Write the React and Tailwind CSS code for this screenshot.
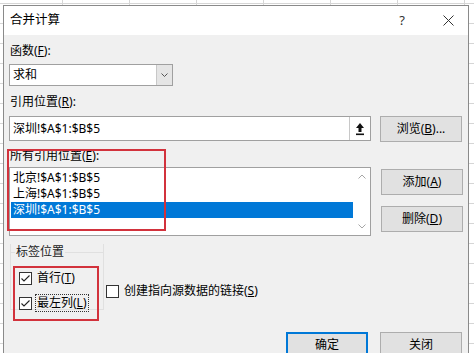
import { useState } from 'react';

const font = { fontFamily: '"Noto Sans", "Noto Sans CJK SC", sans-serif' };

function Btn({ children, primary, className = '' }) {
  return (
    <button
      className={`flex items-center justify-center w-[82px] h-[26px] text-[12px] text-black bg-[#e1e1e1] ${primary ? 'border-2 border-[#0078d7]' : 'border border-[#adadad]'} ${className}`}
    >
      {children}
    </button>
  );
}

function Check({ checked, children, focus }) {
  return (
    <div className="flex items-center h-[20px]">
      <span className="w-[13px] h-[13px] border border-[#333] bg-white flex items-center justify-center">
        {checked && (
          <svg width="11" height="11" viewBox="0 0 11 11">
            <path d="M1.5 5.5 L4 8 L9.5 2.5" fill="none" stroke="#222" strokeWidth="1.1" />
          </svg>
        )}
      </span>
      <span className={`ml-[4px] px-[1px] leading-[16px] ${focus ? 'outline outline-1 outline-dotted outline-[#333]' : ''}`}>
        {children}
      </span>
    </div>
  );
}

export default function App() {
  const [items] = useState(['北京!$A$1:$B$5', '上海!$A$1:$B$5', '深圳!$A$1:$B$5']);

  return (
    <div
      className="relative w-[474px] h-[353px] overflow-hidden bg-white bg-[linear-gradient(to_right,#d6d6d6_1px,transparent_1px),linear-gradient(to_bottom,#d6d6d6_1px,transparent_1px)] bg-[size:67px_20px] bg-[position:-5px_3px]"
      style={font}
    >
      {/* 对话框 */}
      <div className="ml-[3px] mt-[5px] w-[466px] h-[360px] border border-[#8a8a8a] bg-[#f0f0f0] text-[12px] text-black">
        {/* 标题栏 */}
        <div className="h-[29px] bg-white flex items-center pl-[6px] pr-[14px]">
          <span className="text-[12.5px]">合并计算</span>
          <span className="ml-auto mr-[38px] text-[13px] text-[#333]">?</span>
          <svg width="11" height="11" viewBox="0 0 11 11">
            <path d="M0.5 0.5 L10.5 10.5 M10.5 0.5 L0.5 10.5" stroke="#333" strokeWidth="1" />
          </svg>
        </div>

        <div className="relative pl-[5px]">
          <div className="mt-[8px] leading-[16px] pl-[1px]">函数(<u>F</u>):</div>

          <div className="mt-[5px] w-[164px] h-[22px] flex border border-[#a0a0a0] bg-white">
            <span className="flex-1 pl-[3px] leading-[20px]">求和</span>
            <span className="w-[16px] bg-[#e5e5e5] border-l border-[#c8c8c8] flex items-center justify-center">
              <svg width="7" height="4" viewBox="0 0 7 4">
                <path d="M0.5 0.5 L3.5 3.5 L6.5 0.5" fill="none" stroke="#555" strokeWidth="1" />
              </svg>
            </span>
          </div>

          <div className="mt-[8px] leading-[16px] pl-[1px]">引用位置(<u>R</u>):</div>

          <div className="mt-[6px] flex items-start">
            <div className="w-[362px] h-[25px] flex border border-[#a0a0a0] bg-white">
              <span className="flex-1 pl-[3px] leading-[23px]">深圳!$A$1:$B$5</span>
              <span className="w-[21px] border-l border-[#c8c8c8] flex items-center justify-center">
                <svg width="10" height="14" viewBox="0 0 10 14">
                  <path d="M5 1 L9 6 L6.5 6 L6.5 10 L3.5 10 L3.5 6 L1 6 Z" fill="#111" />
                  <rect x="1" y="11.5" width="8" height="1.6" fill="#111" />
                </svg>
              </span>
            </div>
            <Btn className="ml-[9px]">浏览(<u>B</u>)...</Btn>
          </div>

          <div className="mt-[6px] leading-[16px] pl-[1px]">所有引用位置(<u>E</u>):</div>

          <div className="mt-[3px] flex items-start">
            <div className="w-[362px] h-[69px] flex border border-[#a0a0a0] bg-white">
              <div className="flex-1 pt-[2px] pl-[1px]">
                {items.map((t, i) => (
                  <div
                    key={t}
                    className={`h-[16px] leading-[16px] pl-[2px] ${i === 2 ? 'bg-[#0078d7] text-white' : ''}`}
                  >
                    {t}
                  </div>
                ))}
              </div>
              <div className="w-[17px] flex flex-col items-center justify-between py-[6px]">
                <svg width="8" height="5" viewBox="0 0 8 5">
                  <path d="M0.5 4.5 L4 1 L7.5 4.5" fill="none" stroke="#a6a6a6" strokeWidth="1" />
                </svg>
                <svg width="8" height="5" viewBox="0 0 8 5">
                  <path d="M0.5 0.5 L4 4 L7.5 0.5" fill="none" stroke="#a6a6a6" strokeWidth="1" />
                </svg>
              </div>
            </div>
            <div className="ml-[10px] mt-[2px] flex flex-col gap-[11px]">
              <Btn>添加(<u>A</u>)</Btn>
              <Btn>删除(<u>D</u>)</Btn>
            </div>
          </div>

          {/* 标签位置 */}
          <div className="relative mt-[16px] ml-[1px] w-[94px] h-[66px] border border-[#e0e0e0] border-t-0">
            <div className="flex items-center -mt-[8px]">
              <span className="w-[4px] border-t border-[#e0e0e0]" />
              <span className="px-[1px] leading-[16px] text-[#222]">标签位置</span>
              <span className="flex-1 border-t border-[#e0e0e0]" />
            </div>
            <div className="pl-[8px] pt-[8px] flex flex-col gap-[5px]">
              <Check checked>首行(<u>T</u>)</Check>
              <Check checked focus>最左列(<u>L</u>)</Check>
            </div>
            <div className="absolute left-[95px] top-[37px] w-[220px]">
              <Check>创建指向源数据的链接(<u>S</u>)</Check>
            </div>
          </div>

          <div className="mt-[22px] flex justify-end gap-[12px] pr-[6px]">
            <Btn primary>确定</Btn>
            <Btn>关闭</Btn>
          </div>

          {/* 红色标注框 */}
          <div className="absolute left-[3px] top-[106px] w-[159px] h-[82px] border-2 border-[#d2323c]" />
          <div className="absolute left-[9px] top-[223px] w-[86px] h-[55px] border-2 border-[#d2323c]" />
        </div>
      </div>
    </div>
  );
}
